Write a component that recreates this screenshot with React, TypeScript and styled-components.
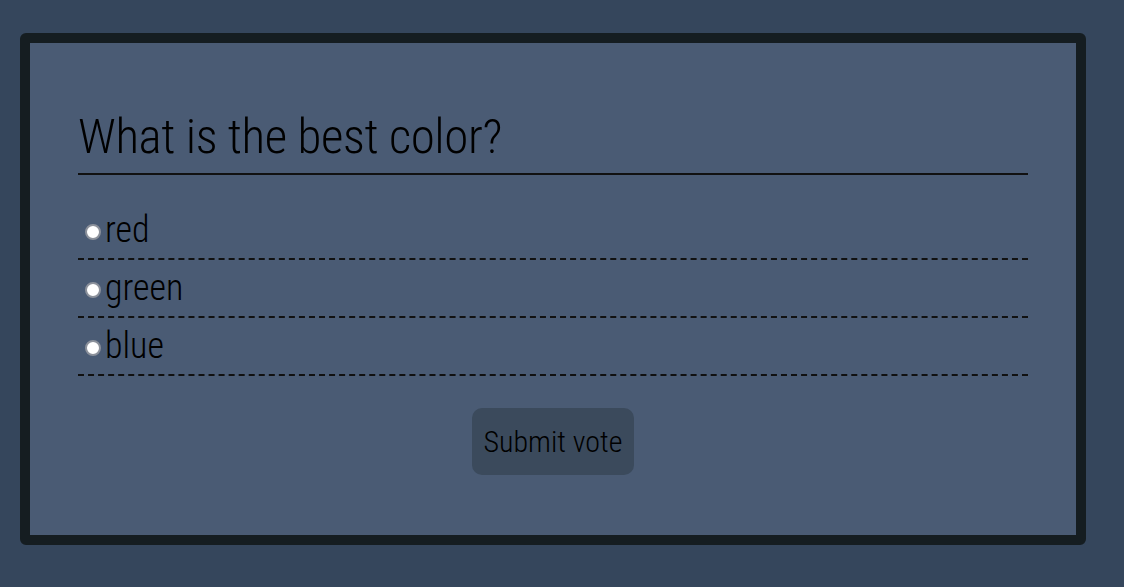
import styled, { createGlobalStyle } from "styled-components";

const GlobalStyle = createGlobalStyle`
  html, body {
    margin: 0;
    padding: 0;
    background: #35465c;
  }
  body {
    font-family: "Roboto", "Liberation Sans", sans-serif;
    font-weight: 300;
    font-stretch: 75%;
    color: #000;
  }
`;

const Page = styled.div`
  padding: 33px 38px 42px 20px;
`;

const Card = styled.form`
  box-sizing: border-box;
  width: 1066px;
  height: 512px;
  background: #4a5b74;
  border: 10px solid #151d21;
  border-radius: 6px;
  padding: 64px 48px 0;
  display: flex;
  flex-direction: column;
`;

const Question = styled.h1`
  margin: 0;
  font-weight: 300;
  font-size: 49px;
  letter-spacing: -0.4px;
  line-height: 60px;
  padding-bottom: 6px;
  border-bottom: 2px solid #111;
`;

const Options = styled.div`
  display: flex;
  flex-direction: column;
  padding-top: 27px;
`;

const Option = styled.label`
  display: flex;
  align-items: center;
  height: 58px;
  font-size: 36px;
  border-bottom: 2px dashed #111;
  box-sizing: border-box;
`;

const Radio = styled.input`
  appearance: none;
  box-sizing: border-box;
  width: 16px;
  height: 16px;
  margin: 3px 4px 0 7px;
  border-radius: 50%;
  background: #fff;
  border: 2px solid #8c919b;
  flex-shrink: 0;
`;

const Actions = styled.div`
  display: flex;
  justify-content: center;
  padding-top: 32px;
`;

const Button = styled.button`
  background: #3b4a5c;
  border: none;
  border-radius: 10px;
  width: 162px;
  height: 67px;
  font-family: inherit;
  font-weight: 300;
  font-stretch: 75%;
  font-size: 30px;
  white-space: nowrap;
  color: #000;
  cursor: pointer;
`;

const options = ["red", "green", "blue"];

export default function App() {
  return (
    <>
      <GlobalStyle />
      <Page>
        <Card onSubmit={(e) => e.preventDefault()}>
          <Question>What is the best color?</Question>
          <Options>
            {options.map((o) => (
              <Option key={o}>
                <Radio type="radio" name="color" value={o} />
                {o}
              </Option>
            ))}
          </Options>
          <Actions>
            <Button type="submit">Submit vote</Button>
          </Actions>
        </Card>
      </Page>
    </>
  );
}
